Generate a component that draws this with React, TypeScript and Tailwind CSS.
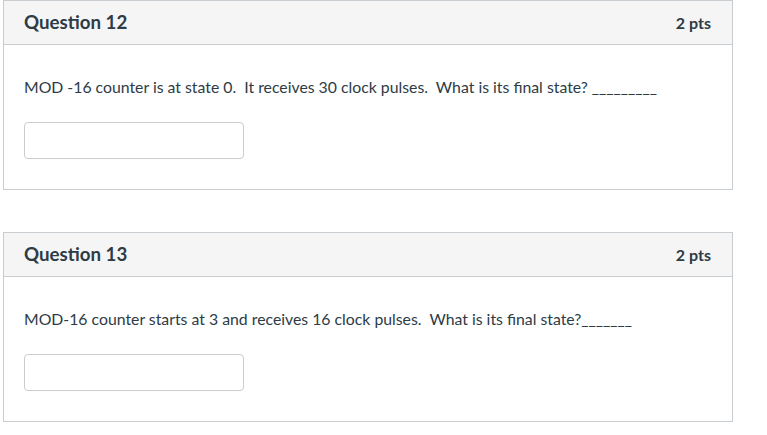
import React from 'react';

const questions = [
  {
    name: 'Question 12',
    points: '2 pts',
    text: 'MOD -16 counter is at state 0.  It receives 30 clock pulses.  What is its final state? _________',
  },
  {
    name: 'Question 13',
    points: '2 pts',
    text: 'MOD-16 counter starts at 3 and receives 16 clock pulses.  What is its final state?_______',
  },
];

export default function App() {
  return (
    <div
      className="w-[767px] h-[435px] bg-white pl-[3px] overflow-hidden"
      style={{ fontFamily: 'Lato, "Open Sans", sans-serif' }}
    >
      <div className="w-[730px] flex flex-col gap-[42px]">
        {questions.map((q) => (
          <div key={q.name} className="border border-[#c7cdd1] bg-white">
            {/* Header */}
            <div className="h-[44px] flex items-center justify-between bg-[#f5f5f5] border-b border-[#c7cdd1] pl-[20px] pr-[21px]">
              <span className="text-[18.7px] font-bold text-[#2d3b45]">{q.name}</span>
              <span className="text-[16px] font-bold text-[#2d3b45]">{q.points}</span>
            </div>
            {/* Body */}
            <div className="pl-[20px] pt-[32px] pb-[30px]">
              <p className="text-[15.8px] leading-[19px] text-[#2d3b45] whitespace-pre">{q.text}</p>
              <input
                type="text"
                className="mt-[26px] block w-[220px] h-[37px] border border-[#c7cdd1] rounded-[4px] bg-white outline-none"
              />
            </div>
          </div>
        ))}
      </div>
    </div>
  );
}
